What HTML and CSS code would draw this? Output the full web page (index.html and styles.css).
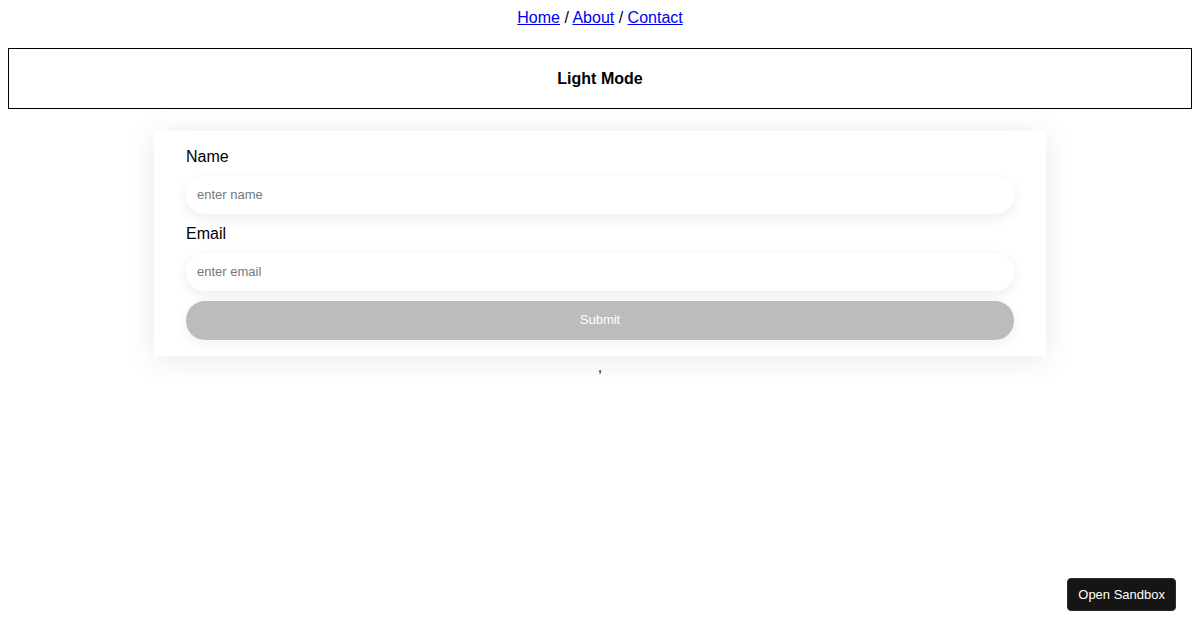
FILE: index.html
```html
<!DOCTYPE html>
<html>
<head>
<meta charset="utf-8">
<link rel="stylesheet" href="styles.css">
</head>
<body>
<nav class="nav"><a href="#">Home</a> / <a href="#">About</a> / <a href="#">Contact</a></nav>
<div class="mode">Light Mode</div>
<form class="card">
  <label class="label">Name</label>
  <input class="field" type="text" placeholder="enter name">
  <label class="label label-gap">Email</label>
  <input class="field" type="text" placeholder="enter email">
  <button class="submit" type="button">Submit</button>
</form>
<div class="comma">,</div>
<button class="sandbox" type="button">Open Sandbox</button>
</body>
</html>
```
FILE: styles.css
```css
html, body {
  margin: 0;
  background: #fff;
}
body {
  padding: 8px;
  font-family: "Liberation Sans", Arial, sans-serif;
  font-size: 16px;
  color: #000;
}
.nav {
  text-align: center;
  line-height: 18px;
  padding-top: 1px;
  font-size: 16px;
}
.nav a {
  color: #0000ee;
}
.mode {
  margin-top: 21px;
  border: 1px solid #000;
  padding: 20px;
  line-height: 19px;
  text-align: center;
  font-weight: bold;
}
.card {
  width: 892px;
  box-sizing: border-box;
  margin: 22px auto 0;
  padding: 17px 32px 16px;
  background: #fff;
  box-shadow: 0 4px 30px rgba(0, 0, 0, 0.09);
  display: flex;
  flex-direction: column;
}
.label {
  line-height: 18px;
  font-size: 16px;
  margin-bottom: 10px;
}
.label-gap {
  margin-top: 11px;
  margin-bottom: 10px;
}
.field {
  height: 38px;
  box-sizing: border-box;
  border: none;
  border-radius: 19px;
  padding: 0 11px 2px;
  font-family: "Liberation Sans", Arial, sans-serif;
  font-size: 13px;
  background: #fff;
  box-shadow: 0 4px 14px rgba(0, 0, 0, 0.08);
  outline: none;
}
.field::placeholder {
  color: #777;
}
.submit {
  margin-top: 10px;
  height: 39px;
  padding: 0 0 2px;
  border: none;
  border-radius: 19px;
  background: #bcbcbc;
  color: #fff;
  font-family: "Liberation Sans", Arial, sans-serif;
  font-size: 13px;
  box-shadow: 0 4px 14px rgba(0, 0, 0, 0.06);
}
.comma {
  text-align: center;
  line-height: 18px;
  margin-top: 2px;
  color: #1a1a40;
}
.sandbox {
  position: fixed;
  right: 24px;
  bottom: 19px;
  height: 33px;
  padding: 0 10px;
  border: 1px solid #2a2a2a;
  border-radius: 4px;
  background: #151515;
  color: #fff;
  font-family: "Liberation Sans", Arial, sans-serif;
  font-size: 13px;
}
```
